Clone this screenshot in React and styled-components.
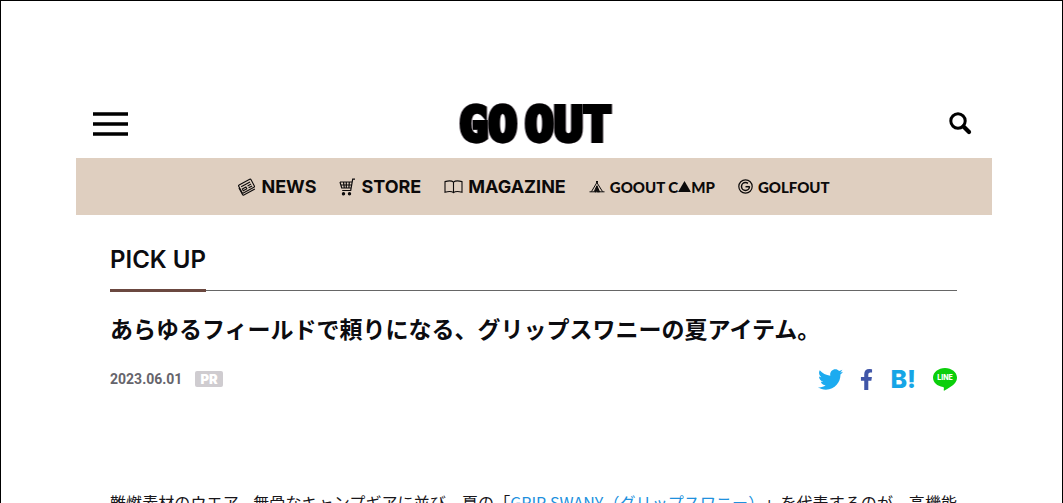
import React from "react";
import styled, { createGlobalStyle } from "styled-components";
import { FaTwitter, FaFacebookF } from "react-icons/fa";

const display = `Inter, "Noto Sans CJK JP", sans-serif`;

const GlobalStyle = createGlobalStyle`
  * { box-sizing: border-box; }
  body {
    margin: 0;
    background: #fff;
    color: #0c0c10;
    font-family: "Noto Sans CJK JP", sans-serif;
  }
  a { text-decoration: none; }
`;

const Page = styled.div`
  min-height: 100vh;
  padding: 88px 70px 0 75px;
  border: 1px solid #000;
  border-bottom: 0;
`;

const Header = styled.header`
  display: flex;
  align-items: center;
  justify-content: space-between;
  height: 69px;
  padding: 0 20px 0 17px;
`;

const IconButton = styled.button`
  display: flex;
  align-items: center;
  justify-content: ${(p) => p.$align};
  width: 36px;
  height: 36px;
  padding: 0;
  border: 0;
  background: none;
  color: #000;
  cursor: pointer;
`;

const Logo = styled.a`
  display: flex;
  gap: 8px;
  padding-left: 6px;
  color: #000;
  font: bold 48px/52px "DejaVu Sans Mono", monospace;
  -webkit-text-stroke: 4px #000;
  filter: drop-shadow(1px 0 0 #8d868c) drop-shadow(-1px 0 0 #8d868c);
`;

const Nav = styled.nav`
  display: flex;
  align-items: center;
  justify-content: center;
  gap: 23px;
  height: 57px;
  background: #dfcfc0;
`;

const NavLink = styled.a`
  display: flex;
  align-items: center;
  gap: 5px;
  color: #0c0a0a;
  font: ${(p) => (p.$brand ? "900 15px/24px Lato" : "700 18px/24px Inter")}, sans-serif;
`;

const Brand = styled.span`
  display: flex;
  align-items: center;
  white-space: pre;
`;

const Main = styled.main`
  padding: 0 35px 0 34px;
`;

const SectionHead = styled.div`
  display: flex;
  height: 76px;
  border-bottom: 1px solid #666;
`;

const SectionTitle = styled.h2`
  height: 77px;
  margin: 0;
  padding-top: 29px;
  border-bottom: 3px solid #6b4840;
  font: 600 24px/32px ${display};
`;

const Title = styled.h1`
  margin: 19px 0 0;
  font-size: 23px;
  font-weight: 700;
  line-height: 36px;
`;

const Meta = styled.div`
  display: flex;
  align-items: center;
  justify-content: space-between;
  height: 32px;
  margin-top: 17px;
`;

const Group = styled.div`
  display: flex;
  align-items: center;
  gap: ${(p) => p.$gap};
`;

const PostDate = styled.time`
  color: #66646b;
  font: 700 14px/20px Roboto, sans-serif;
`;

const Badge = styled.span`
  padding: 0 5px;
  border-radius: 2px;
  background: #cfccd0;
  color: #fff;
  font: 900 13px/16px ${display};
`;

const Share = styled.a`
  display: flex;
  color: ${(p) => p.$color};
  font: 800 25px/24px ${display};
`;

const FacebookIcon = styled(FaFacebookF)`
  width: 13px;
  height: 21px;
`;

const Lead = styled.p`
  margin: 91px 0 0;
  font-size: 16px;
  line-height: 32px;
  color: #18161a;
  text-align: justify;
  text-align-last: justify;
  text-spacing-trim: space-all;
`;

const TextLink = styled.a`
  color: #2090dd;
`;

const line = { fill: "none", stroke: "currentColor" };

const NewsIcon = () => (
  <svg width="18" height="18" viewBox="0 0 18 18" {...line} strokeWidth="1.1">
    <g transform="rotate(-28 9 9)">
      <rect x="2" y="3.5" width="14" height="9" rx="1" />
      <path d="M1.5 6v7.5q0 1 1 1H15M4 6h10M4 8.5h4v2H4zM10 8.3h4M10 10.5h4" />
    </g>
  </svg>
);

const CartIcon = () => (
  <svg width="17" height="18" viewBox="0 0 17 18" {...line} strokeWidth="1.2">
    <path d="M16 1.2h-2.3l-2 11.3H3.2M1 4h12M1 4l1.7 6h9.4M1.8 7h11M4.5 4l.8 6M7.3 4v6M10.3 4l-.4 6" />
    <circle cx="4.5" cy="15.8" r="1.1" fill="currentColor" />
    <circle cx="10.5" cy="15.8" r="1.1" fill="currentColor" />
  </svg>
);

const BookIcon = () => (
  <svg width="19" height="14" viewBox="0 0 19 14" {...line} strokeWidth="1.1">
    <path d="M9.5 2.2C8 .8 4 .8 1 1.6v10.6c3-.8 7-.8 8.5.5 1.5-1.3 5.5-1.3 8.5-.5V1.6C15 .8 11 .8 9.5 2.2zM9.5 2.2v10.5" />
  </svg>
);

const TentIcon = () => (
  <svg width="16" height="14" viewBox="0 0 16 14" {...line} strokeWidth="1">
    <path d="M7.2 1l1.3 2M8.8 1L2.5 11.500M7.500 2l6 9.500M.5 11.800h15M8 5.500L5.300 11.500" />
    <path d="M8 6l2.500 5.800H8.300L8 9l-1 2.800H6z" fill="currentColor" />
  </svg>
);

const GolfIcon = () => (
  <svg width="15" height="15" viewBox="0 0 15 15" {...line}>
    <circle cx="7.5" cy="7.5" r="6.7" strokeWidth="1.2" />
    <circle cx="7.5" cy="7.5" r="4" strokeWidth="1.5" strokeDasharray="21 4.1" />
    <path d="M7.5 7.7h4.2" strokeWidth="1.5" />
  </svg>
);

const Peak = () => (
  <svg width="13" height="11" viewBox="0 0 14 12" role="img" aria-label="A">
    <path d="M7 0l7 12H0z" fill="currentColor" />
  </svg>
);

const LineIcon = () => (
  <svg width="24" height="23" viewBox="0 0 24 23">
    <path
      d="M12 0C5.4 0 0 4.3 0 9.6c0 4.8 4.2 8.7 10 9.5.8.2 1 .6.9 1.3l-.2 1.6c0 .6.3.8.9.5 3-1.7 8.4-4.7 10.8-8 1.1-1.4 1.6-3 1.6-4.9C24 4.3 18.6 0 12 0z"
      fill="#0bcf0b"
    />
    <text x="12" y="12" fill="#fff" textAnchor="middle" fontFamily="Inter, sans-serif" fontWeight="800" fontSize="7">
      LINE
    </text>
  </svg>
);

export default function App() {
  return (
    <>
      <GlobalStyle />
      <Page>
        <Header>
          <IconButton $align="flex-start" aria-label="メニュー">
            <svg width="35" height="24" viewBox="0 0 35 24">
              <path d="M0 2h35M0 12h35M0 22h35" stroke="#000" strokeWidth="3.4" />
            </svg>
          </IconButton>
          <Logo href="#">
            <span>GO</span>
            <span>OUT</span>
          </Logo>
          <IconButton $align="flex-end" aria-label="検索">
            <svg width="23" height="23" viewBox="0 0 23 23" {...line}>
              <circle cx="9" cy="9" r="7.2" strokeWidth="3" />
              <path d="M14.5 14.5l5.500 5.500" strokeWidth="4.2" strokeLinecap="round" />
            </svg>
          </IconButton>
        </Header>
        <Nav>
          <NavLink href="#"><NewsIcon />NEWS</NavLink>
          <NavLink href="#"><CartIcon />STORE</NavLink>
          <NavLink href="#"><BookIcon />MAGAZINE</NavLink>
          <NavLink href="#" $brand>
            <TentIcon />
            <Brand>GOOUT C<Peak />MP</Brand>
          </NavLink>
          <NavLink href="#" $brand><GolfIcon />GOLFOUT</NavLink>
        </Nav>
        <Main>
          <SectionHead>
            <SectionTitle>PICK UP</SectionTitle>
          </SectionHead>
          <Title>あらゆるフィールドで頼りになる、グリップスワニーの夏アイテム。</Title>
          <Meta>
            <Group $gap="13px">
              <PostDate dateTime="2023-06-01">2023.06.01</PostDate>
              <Badge>PR</Badge>
            </Group>
            <Group $gap="17px">
              <Share href="#" $color="#1cabf0" aria-label="Twitter"><FaTwitter size={25} /></Share>
              <Share href="#" $color="#4056a8" aria-label="Facebook"><FacebookIcon /></Share>
              <Share href="#" $color="#16a5e6">B!</Share>
              <Share href="#" aria-label="LINE"><LineIcon /></Share>
            </Group>
          </Meta>
          <Lead>
            難燃素材のウエア、無骨なキャンプギアに並び、夏の「<TextLink href="#">GRIP SWANY（グリップスワニー）</TextLink>」を代表するのが、高機能
          </Lead>
        </Main>
      </Page>
    </>
  );
}
